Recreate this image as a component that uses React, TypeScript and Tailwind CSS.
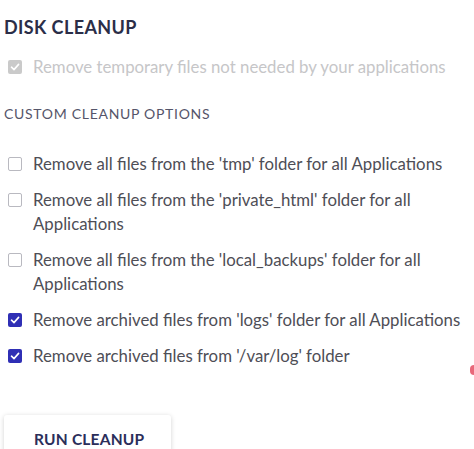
import React from "react";

const Box = ({ state }: { state: "off" | "on" | "disabled" }) => {
  if (state === "off")
    return <span className="mt-[5px] h-[14px] w-[14px] shrink-0 rounded-[2px] border border-[#b9b9c0] bg-white" />;
  const bg = state === "on" ? "bg-[#2f2fb5]" : "bg-[#cacaca]";
  return (
    <span className={`mt-[5px] flex h-[14px] w-[14px] shrink-0 items-center justify-center rounded-[2px] ${bg}`}>
      <svg width="10" height="10" viewBox="0 0 10 10" fill="none">
        <path d="M1.5 5.2 L4 7.6 L8.6 2.4" stroke="white" strokeWidth="1.6" strokeLinecap="round" strokeLinejoin="round" />
      </svg>
    </span>
  );
};

const Row = ({ state, lines }: { state: "off" | "on" | "disabled"; lines: string[] }) => (
  <div className="flex gap-[11px] pl-[8px]">
    <Box state={state} />
    <div className={`text-[16.8px] leading-[24px] ${state === "disabled" ? "text-[#c6c6c8]" : "text-[#4e4e56]"}`}>
      {lines.map((l, i) => (
        <div key={i}>{l}</div>
      ))}
    </div>
  </div>
);

export default function App() {
  return (
    <div
      className="relative h-[449px] w-[474px] overflow-hidden bg-white"
      style={{ fontFamily: "Lato, 'Open Sans', sans-serif" }}
    >
      <div className="flex flex-col pl-[4px] pt-[15px]">
        <div className="text-[18px] font-bold leading-[24px] tracking-[0.4px] text-[#2b2e48]">DISK CLEANUP</div>
        <div className="mt-[16px] -ml-[4px]">
          <Row state="disabled" lines={["Remove temporary files not needed by your applications"]} />
        </div>
        <div className="mt-[25px] text-[14px] leading-[20px] tracking-[0.7px] text-[#55556a]">CUSTOM CLEANUP OPTIONS</div>
        <div className="mt-[28px] -ml-[4px] flex flex-col gap-[12px]">
          <Row state="off" lines={["Remove all files from the 'tmp' folder for all Applications"]} />
          <Row state="off" lines={["Remove all files from the 'private_html' folder for all", "Applications"]} />
          <Row state="off" lines={["Remove all files from the 'local_backups' folder for all", "Applications"]} />
          <Row state="on" lines={["Remove archived files from 'logs' folder for all Applications"]} />
          <Row state="on" lines={["Remove archived files from '/var/log' folder"]} />
        </div>
        <div className="mt-[47px] h-[48px] w-[167px] rounded-[3px] bg-white pt-[14px] pl-[30px] text-[15.5px] font-bold leading-[20px] tracking-[0.2px] text-[#2b2e5a] shadow-[0_1px_5px_rgba(0,0,0,0.18)]">
          RUN CLEANUP
        </div>
      </div>
      <span className="absolute left-[470px] top-[365px] h-[10px] w-[8px] rounded-full bg-[#e2435a] opacity-80" />
    </div>
  );
}
